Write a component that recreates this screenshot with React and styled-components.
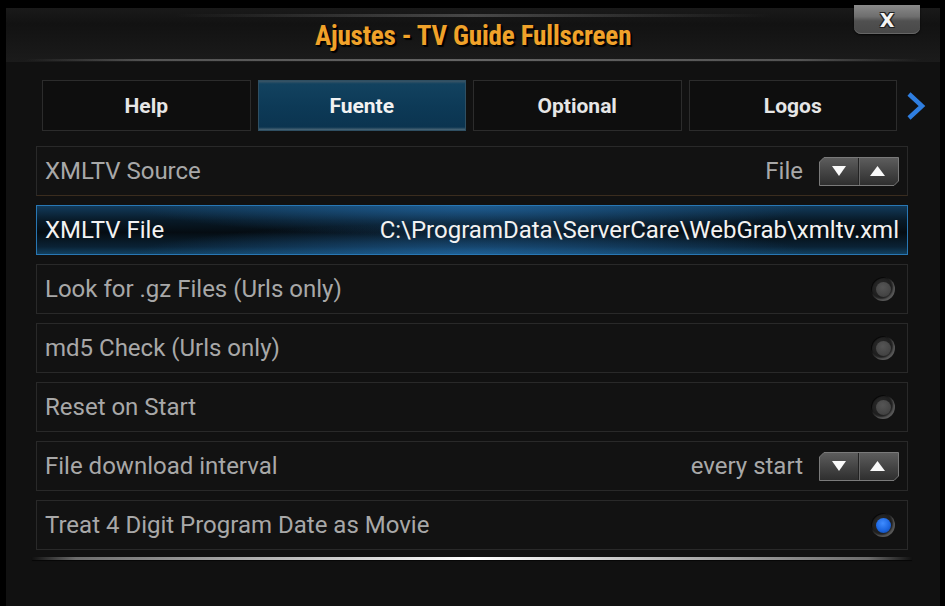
import React from "react";
import styled, { createGlobalStyle } from "styled-components";

const Global = createGlobalStyle`
  html, body { margin: 0; padding: 0; background: #000; }
  body { width: 945px; height: 606px; overflow: hidden; font-family: Roboto, "Liberation Sans", sans-serif; }
`;

const Screen = styled.div`
  width: 945px;
  height: 606px;
  background: #000;
  padding: 8px 5px 0 6px;
  box-sizing: border-box;
  display: flex;
`;

const Dialog = styled.div`
  flex: 1;
  min-width: 0;
  background: #111111;
  display: flex;
  flex-direction: column;
`;

const Header = styled.div`
  position: relative;
  height: 54px;
  display: flex;
  align-items: center;
  justify-content: center;
  background-color: #151515;
  background-image:
    linear-gradient(90deg, transparent 18%, rgba(200,200,200,0.28) 50%, transparent 82%),
    linear-gradient(90deg, transparent 2%, rgba(190,190,190,0.35) 15%, rgba(190,190,190,0.45) 50%, rgba(190,190,190,0.35) 85%, transparent 98%),
    linear-gradient(180deg, #1a1a1a 0%, #121212 30%, #1b1b1b 100%);
  background-size: 100% 3px, 100% 2px, 100% 100%;
  background-position: 0 6px, 0 51px, 0 0;
  background-repeat: no-repeat;
`;

const Title = styled.h1`
  margin: 0;
  padding-top: 1px;
  font-family: "Liberation Sans Narrow", "Roboto Condensed", Roboto, sans-serif;
  font-weight: 700;
  font-size: 28px;
  color: #f0a22a;
  letter-spacing: -0.2px;
  text-shadow: 2px 2px 1px #000, 1px 1px 0 #000;
  transform: scaleX(0.97);
`;

const CloseButton = styled.div`
  position: absolute;
  top: -3px;
  right: 20px;
  width: 66px;
  height: 29px;
  border-radius: 0 0 7px 7px;
  background: linear-gradient(180deg, #8a8a8a 0%, #6e6e6e 40%, #505050 55%, #484848 100%);
  box-shadow: 0 1px 2px rgba(0,0,0,0.8), inset 0 -1px 0 #666;
  display: flex;
  align-items: center;
  justify-content: center;
  font-family: "DejaVu Sans", sans-serif;
  font-weight: 700;
  font-size: 19px;
  color: #f4f4f4;
  text-shadow: -1px -1px 0 #222, 1px -1px 0 #222, -1px 1px 0 #222, 1px 1px 0 #222;
`;

const Content = styled.div`
  margin: 18px 32px 0 30px;
  display: flex;
  flex-direction: column;
`;

const TabBar = styled.div`
  display: flex;
  align-items: center;
  padding-left: 6px;
  margin: 0 -24px 15px 0;
`;

const Tabs = styled.div`
  display: grid;
  grid-template-columns: repeat(4, 208.5px);
  column-gap: 7px;
`;

const Tab = styled.div`
  height: 51px;
  box-sizing: border-box;
  display: flex;
  align-items: center;
  justify-content: center;
  font-weight: 700;
  font-size: 21px;
  color: ${p => (p.$active ? "#f2f2f2" : "#e6e6e6")};
  border: 1px solid ${p => (p.$active ? "#2f4f62" : "#2c2c2c")};
  background: ${p =>
    p.$active
      ? "linear-gradient(180deg, #3b5566 0%, #12425f 6%, #0d3a57 50%, #0b3450 94%, #4d6878 100%)"
      : "#0e0e0e"};
`;

const Chevron = styled.svg`
  margin-left: 8px;
  width: 22px;
  height: 28px;
`;

const Rows = styled.div`
  display: flex;
  flex-direction: column;
  gap: 9px;
`;

const Row = styled.div`
  height: 50px;
  box-sizing: border-box;
  display: flex;
  align-items: center;
  padding: 0 ${p => p.$pr || 8}px 0 8px;
  font-size: 24px;
  color: ${p => (p.$focused ? "#f2f2f2" : "#a8a8a8")};
  border: 1px solid ${p => (p.$focused ? "#2877b4" : "#292929")};
  background: ${p =>
    p.$focused
      ? `radial-gradient(ellipse 55% 90% at 50% 0%, rgba(40,120,190,0.55), transparent 70%),
         radial-gradient(ellipse 55% 90% at 50% 100%, rgba(40,120,190,0.55), transparent 70%),
         linear-gradient(180deg, #123a5a 0%, #081a28 30%, #050c12 55%, #0a2235 85%, #12405f 100%)`
      : "#121212"};
  ${p => p.$warm && "border-bottom-color: #3a2c1e;"}
`;

const Label = styled.span`
  flex: 1;
  white-space: nowrap;
`;

const Value = styled.span`
  white-space: nowrap;
  margin-right: ${p => p.$gap || 0}px;
`;

const Separator = styled.div`
  margin: 7px -4px 0 -4px;
  height: 3px;
  background: linear-gradient(90deg, transparent 0%, rgba(200,200,200,0.5) 5%, #ffffff 50%, rgba(200,200,200,0.5) 95%, transparent 100%);
  box-shadow: 0 1px 1px rgba(0,0,0,0.6);
`;

const Radio = styled.span`
  width: 24px;
  height: 24px;
  border-radius: 50%;
  box-sizing: border-box;
  background: radial-gradient(circle at 40% 40%, #2a2a2a 0%, #1a1a1a 70%);
  box-shadow: inset -2px -2px 2px rgba(140,140,140,0.55), inset 1px 1px 1px rgba(0,0,0,0.8);
  display: flex;
  align-items: center;
  justify-content: center;
  &::after {
    content: "";
    width: 15px;
    height: 15px;
    border-radius: 50%;
    background: ${p =>
      p.$on
        ? "radial-gradient(circle at 45% 35%, #3f8cff 0%, #1c66e0 55%, #0d3f9a 100%)"
        : "radial-gradient(circle at 45% 35%, #555 0%, #464646 60%, #383838 100%)"};
  }
`;

function Spinner() {
  return (
    <svg width="80" height="29" viewBox="0 0 80 29">
      <defs>
        <linearGradient id="spg" x1="0" y1="0" x2="0" y2="1">
          <stop offset="0" stopColor="#5e5e5e" />
          <stop offset="0.5" stopColor="#454545" />
          <stop offset="1" stopColor="#2e2e2e" />
        </linearGradient>
      </defs>
      <path d="M5 0.5 H79.5 V24 L75 28.5 H0.5 V5 Z" fill="url(#spg)" stroke="#7a7a7a" strokeWidth="1" />
      <line x1="39.5" y1="1" x2="39.5" y2="28" stroke="#222" strokeWidth="1" />
      <line x1="40.5" y1="1" x2="40.5" y2="28" stroke="#666" strokeWidth="1" />
      <path d="M13 9 H27 L20 19 Z" fill="#fafafa" />
      <path d="M51 19 H66 L58.5 9 Z" fill="#fafafa" />
    </svg>
  );
}

export default function App() {
  return (
    <>
      <Global />
      <Screen>
        <Dialog>
          <Header>
            <Title>Ajustes - TV Guide Fullscreen</Title>
            <CloseButton>X</CloseButton>
          </Header>
          <Content>
            <TabBar>
              <Tabs>
                <Tab>Help</Tab>
                <Tab $active>Fuente</Tab>
                <Tab>Optional</Tab>
                <Tab>Logos</Tab>
              </Tabs>
              <Chevron viewBox="0 0 22 28">
                <path d="M4 2 L17 14 L4 26" fill="none" stroke="#2f7ee0" strokeWidth="4.5" strokeLinejoin="miter" />
              </Chevron>
            </TabBar>
            <Rows>
              <Row $warm>
                <Label>XMLTV Source</Label>
                <Value $gap={16}>File</Value>
                <Spinner />
              </Row>
              <Row $focused $pr={8}>
                <Label>XMLTV File</Label>
                <Value>C:\ProgramData\ServerCare\WebGrab\xmltv.xml</Value>
              </Row>
              <Row $pr={12}>
                <Label>Look for .gz Files (Urls only)</Label>
                <Radio />
              </Row>
              <Row $pr={12}>
                <Label>md5 Check (Urls only)</Label>
                <Radio />
              </Row>
              <Row $pr={12}>
                <Label>Reset on Start</Label>
                <Radio />
              </Row>
              <Row>
                <Label>File download interval</Label>
                <Value $gap={16}>every start</Value>
                <Spinner />
              </Row>
              <Row $pr={12}>
                <Label>Treat 4 Digit Program Date as Movie</Label>
                <Radio $on />
              </Row>
            </Rows>
            <Separator />
          </Content>
        </Dialog>
      </Screen>
    </>
  );
}
